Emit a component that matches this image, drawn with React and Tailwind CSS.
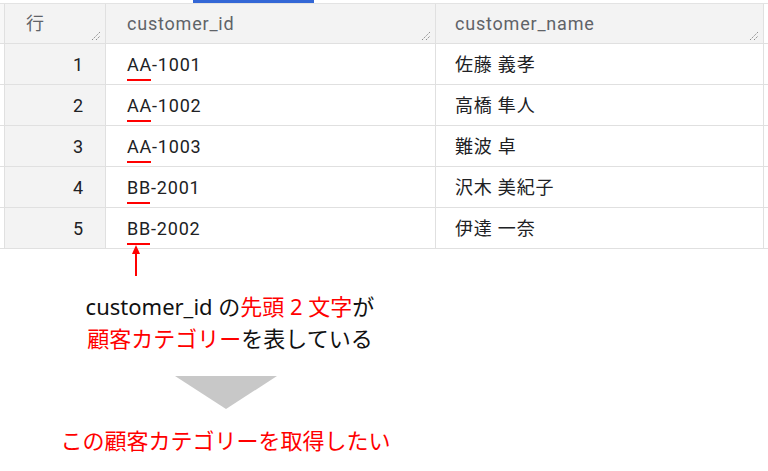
import React from 'react';

const rows = [
  { no: 1, id: 'AA-1001', name: '佐藤 義孝' },
  { no: 2, id: 'AA-1002', name: '高橋 隼人' },
  { no: 3, id: 'AA-1003', name: '難波 卓' },
  { no: 4, id: 'BB-2001', name: '沢木 美紀子' },
  { no: 5, id: 'BB-2002', name: '伊達 一奈' },
];

function Grip() {
  return (
    <svg className="absolute right-[4px] bottom-[2px]" width="10" height="10" viewBox="0 0 10 10">
      <path d="M1 9 L9 1 M5 9 L9 5" stroke="#8a8a8a" strokeWidth="1" strokeDasharray="1.5 1" fill="none" />
    </svg>
  );
}

function App() {
  return (
    <div className="relative w-[768px] h-[471px] overflow-hidden bg-white font-['Roboto','Noto_Sans_CJK_JP',sans-serif]">
      {/* tab strip */}
      <div className="h-[4px] border-b border-[#e3e3e3]">
        <div className="ml-[193px] w-[121px] h-[3px] bg-[#3367d6]" />
      </div>

      {/* table */}
      <div className="text-[18px] tracking-[0.8px]">
        <div className="flex h-[40px] border-b border-[#e0e0e0] bg-[#f3f3f3] text-[#5f6368]">
          <div className="w-[5px] border-r border-[#e0e0e0] bg-[#f7f7f7]" />
          <div className="relative w-[101px] border-r border-[#e0e0e0] pl-[21px] flex items-center">
            行
            <Grip />
          </div>
          <div className="relative w-[330px] border-r border-[#e0e0e0] pl-[21px] flex items-center">
            customer_id
            <Grip />
          </div>
          <div className="relative w-[328px] border-r border-[#e0e0e0] pl-[19px] flex items-center">
            customer_name
            <Grip />
          </div>
          <div className="flex-1 bg-white" />
        </div>
        {rows.map((r) => (
          <div key={r.no} className="flex h-[41px] border-b border-[#e0e0e0] text-[#202124]">
            <div className="w-[5px] border-r border-[#e0e0e0]" />
            <div className="w-[101px] border-r border-[#e0e0e0] bg-[#f3f3f3] pr-[21px] flex items-center justify-end">
              {r.no}
            </div>
            <div className="w-[330px] border-r border-[#e0e0e0] pl-[21px] flex items-center">
              <span className="relative">
                {r.id.slice(0, 2)}
                <span className="absolute left-0 right-[1px] bottom-[-3px] h-[2px] bg-[#ff0000]" />
              </span>
              {r.id.slice(2)}
            </div>
            <div className="w-[328px] border-r border-[#e0e0e0] pl-[19px] flex items-center">
              {r.name}
            </div>
            <div className="flex-1" />
          </div>
        ))}
      </div>

      {/* pointer arrow */}
      <svg className="absolute left-[130px] top-[244px]" width="12" height="32" viewBox="0 0 12 32">
        <path d="M6 1 L10 10 L2 10 Z" fill="#ff0000" />
        <rect x="5" y="8" width="2" height="24" fill="#ff0000" />
      </svg>

      {/* annotation */}
      <div className="font-['Noto_Sans','Noto_Sans_CJK_JP',sans-serif] text-[22px] leading-[32px] text-[#111]">
        <div className="w-[460px] mt-[41px] flex flex-col items-center">
          <div>
            customer_id の<span className="text-[#ff0000]">先頭 2 文字</span>が
          </div>
          <div>
            <span className="text-[#ff0000]">顧客カテゴリー</span>を表している
          </div>
        </div>
        <div className="w-[451px] flex flex-col items-center">
          <div className="mt-[22px] w-0 h-0 border-l-[51px] border-r-[51px] border-t-[33px] border-l-transparent border-r-transparent border-t-[#c8c8c8]" />
          <div className="mt-[15px] text-[#ff0000]">この顧客カテゴリーを取得したい</div>
        </div>
      </div>
    </div>
  );
}

export default App;
